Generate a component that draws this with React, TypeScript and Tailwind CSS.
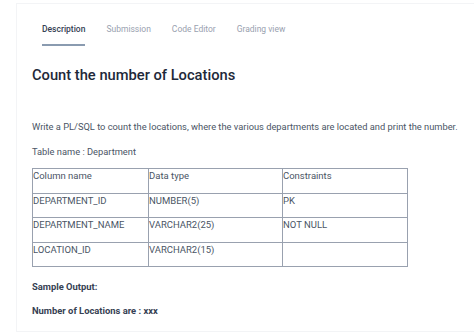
export default function App() {
  const rows = [
    ["Column name", "Data type", "Constraints"],
    ["DEPARTMENT_ID", "NUMBER(5)", "PK"],
    ["DEPARTMENT_NAME", "VARCHAR2(25)", "NOT NULL"],
    ["LOCATION_ID", "VARCHAR2(15)", ""],
  ];
  return (
    <div className="w-[474px] h-[335px] bg-white overflow-hidden font-['Roboto',sans-serif]">
      <div className="ml-4 mt-[3px] h-[329px] border-l border-t border-b border-gray-100 pl-[15px]">
        {/* Tabs */}
        <div className="flex gap-[21px] pl-[10px] pt-[19px] text-[8.5px]">
          <div className="flex flex-col">
            <span className="text-gray-700 font-medium leading-[12px]">Description</span>
            <div className="mt-[9px] h-[2px] bg-[#8a9bb0]" />
          </div>
          <span className="text-gray-400 leading-[12px]">Submission</span>
          <span className="text-gray-400 leading-[12px]">Code Editor</span>
          <span className="text-gray-400 leading-[12px]">Grading view</span>
        </div>

        <h1 className="mt-[19px] text-[14.7px] font-medium text-gray-800 leading-[20px]">
          Count the number of Locations
        </h1>

        <p className="mt-[36px] text-[9.3px] text-gray-600 leading-[12px]">
          Write a PL/SQL to count the locations, where the various departments are located and print the number.
        </p>
        <p className="mt-[13px] text-[9.3px] text-gray-600 leading-[12px]">Table name : Department</p>

        <table className="mt-[10px] border-collapse border-[1.5px] border-gray-500 text-[9.5px] text-gray-600">
          <tbody>
            {rows.map((r, i) => (
              <tr key={i}>
                {r.map((c, j) => (
                  <td
                    key={j}
                    className={`border border-gray-400 align-top h-[24.5px] pt-[1px] px-0 leading-[12px] ${
                      j === 0 ? "w-[116px]" : j === 1 ? "w-[134px]" : "w-[125px]"
                    }`}
                  >
                    {c}
                  </td>
                ))}
              </tr>
            ))}
          </tbody>
        </table>

        <p className="mt-[14px] text-[9.4px] font-bold text-gray-700 leading-[12px]">Sample Output:</p>
        <p className="mt-[12px] text-[9.4px] font-bold text-gray-700 leading-[12px]">Number of Locations are : xxx</p>
      </div>
    </div>
  );
}
